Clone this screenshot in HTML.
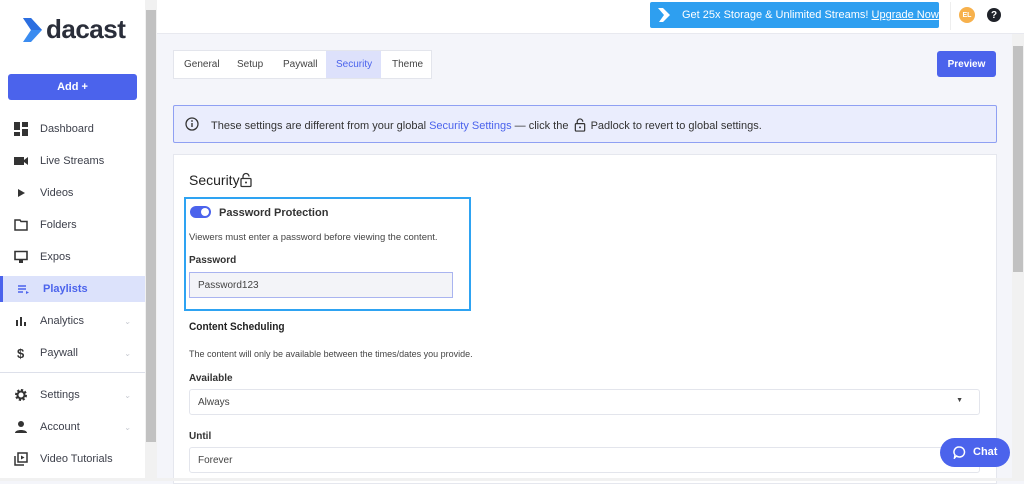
<!DOCTYPE html>
<html><head><meta charset="utf-8"><style>
*{box-sizing:border-box;margin:0;padding:0}
body{width:1024px;height:481px;overflow:hidden;font-family:"Liberation Sans",sans-serif;background:#f4f5fa;position:relative;color:#222}
.abs{position:absolute}
.side{left:0;top:0;width:145px;height:481px;background:#fff}
.sb{left:145px;top:0;width:12px;height:481px;background:#f1f1f1}
.nav{position:absolute;left:0;width:145px;height:26px;font-size:11px;color:#3c3f4a;display:flex;align-items:center}
.nav svg{position:absolute;left:14px;width:14px;height:14px}
.nav span{position:absolute;left:40px}
.chev{position:absolute;left:124px;font-size:8px;color:#c5c8d0}
.lbl{font-size:10px;font-weight:bold;color:#333}
.txt{font-size:10px;color:#444}
.btn{display:flex;align-items:center;justify-content:center}
</style></head><body>
<div class="abs side"></div>
<svg class="abs" style="left:22px;top:18px" width="22" height="24" viewBox="0 0 22 24"><path d="M1 0h8l11 12-11 12H1l8-12z" fill="#3b8cf0"/><path d="M1 0h8l11 12H9z" fill="#2c6ee0"/></svg>
<div class="abs" style="left:46px;top:14px;font-size:26px;font-weight:bold;color:#2a2e3a;letter-spacing:-0.5px">dacast</div>
<div class="abs btn" style="left:8px;top:74px;width:129px;height:26px;background:#4b63ec;border-radius:3px;color:#fff;font-size:11px;font-weight:bold">Add +</div>

<div class="nav" style="top:116px"><svg viewBox="0 0 14 14"><path d="M0 0h6v8H0zM8 0h6v5H8zM8 7h6v7H8zM0 10h6v4H0z" fill="#333"/></svg><span>Dashboard</span></div>
<div class="nav" style="top:148px"><svg viewBox="0 0 14 14"><path d="M0 3h10v8H0zM10 6l4-3v8l-4-3z" fill="#333"/></svg><span>Live Streams</span></div>
<div class="nav" style="top:180px"><svg viewBox="0 0 14 14"><path d="M4 3l7 4-7 4z" fill="#333"/></svg><span>Videos</span></div>
<div class="nav" style="top:212px"><svg viewBox="0 0 14 14"><path d="M1 2h5l1 1.5h6V12H1z" fill="none" stroke="#333" stroke-width="1.5"/></svg><span>Folders</span></div>
<div class="nav" style="top:244px"><svg viewBox="0 0 14 14"><path d="M1 1.5h12v8H1z" fill="none" stroke="#333" stroke-width="1.6"/><path d="M5 10h4v3H5z" fill="#333"/></svg><span>Expos</span></div>
<div class="abs" style="left:0;top:276px;width:145px;height:26px;background:#dce2fb"></div>
<div class="abs" style="left:0;top:276px;width:3px;height:26px;background:#4b63ec"></div>
<div class="nav" style="top:276px;color:#4b63ec"><svg viewBox="0 0 14 14" style="left:17px"><path d="M1 4h8M1 7h8M1 10h5" stroke="#4b63ec" stroke-width="1.4"/><path d="M9 9l3 1.5L9 12z" fill="#4b63ec"/></svg><span style="left:43px;font-weight:bold">Playlists</span></div>
<div class="nav" style="top:308px"><svg viewBox="0 0 14 14"><path d="M2 6h2v6H2zM6 3h2v9H6zM10 8h2v4h-2z" fill="#333"/></svg><span>Analytics</span><i class="chev">⌄</i></div>
<div class="nav" style="top:340px"><svg viewBox="0 0 14 14"><text x="3" y="12" font-size="13" font-weight="bold" fill="#333" font-family="Liberation Sans">$</text></svg><span>Paywall</span><i class="chev">⌄</i></div>
<div class="abs" style="left:0;top:372px;width:145px;height:1px;background:#dde0ea"></div>
<div class="nav" style="top:382px"><svg viewBox="0 0 14 14"><circle cx="7" cy="7" r="4.5" fill="none" stroke="#333" stroke-width="3" stroke-dasharray="2 1.5"/><circle cx="7" cy="7" r="3.5" fill="none" stroke="#333" stroke-width="2"/></svg><span>Settings</span><i class="chev">⌄</i></div>
<div class="nav" style="top:414px"><svg viewBox="0 0 14 14"><circle cx="7" cy="4" r="3" fill="#333"/><path d="M1 13c0-4 12-4 12 0z" fill="#333"/></svg><span>Account</span><i class="chev">⌄</i></div>
<div class="nav" style="top:446px"><svg viewBox="0 0 14 14"><path d="M4 1h9v9H4z" fill="none" stroke="#333" stroke-width="1.5"/><path d="M1 4v9h9" fill="none" stroke="#333" stroke-width="1.5"/><path d="M7 3.5l3.5 2-3.5 2z" fill="#333"/></svg><span>Video Tutorials</span></div>

<div class="abs sb"><div class="abs" style="left:1px;top:10px;width:10px;height:432px;background:#c1c1c1"></div></div>
<div class="abs" style="left:157px;top:0;width:867px;height:34px;background:#fff;border-bottom:1px solid #e8e9ef"></div>
<div class="abs" style="left:650px;top:2px;width:289px;height:26px;background:#2e9ff0;border-radius:2px;color:#fff;font-size:11px;line-height:26px"><svg class="abs" style="left:8px;top:6px" width="12" height="14" viewBox="0 0 12 14"><path d="M0 0h5l7 7-7 7H1l5-7z" fill="#fff"/></svg><span style="position:absolute;left:32px">Get 25x Storage &amp; Unlimited Streams! <u>Upgrade Now</u></span></div>
<div class="abs" style="left:950px;top:2px;width:1px;height:28px;background:#eee"></div>
<div class="abs btn" style="left:959px;top:7px;width:16px;height:16px;border-radius:50%;background:#f7b14c;color:#fff;font-size:7px;font-weight:bold">EL</div>
<div class="abs btn" style="left:987px;top:8px;width:14px;height:14px;border-radius:50%;background:#1f2229;color:#fff;font-size:10px;font-weight:bold">?</div>
<div class="abs" style="left:1012px;top:34px;width:12px;height:447px;background:#f1f1f1"><div class="abs" style="left:1px;top:12px;width:10px;height:226px;background:#c1c1c1"></div></div>

<div class="abs" style="left:173px;top:50px;width:259px;height:29px;background:#fff;border:1px solid #e3e5ec"></div>
<div class="abs" style="left:326px;top:51px;width:55px;height:27px;background:#dde1fb"></div>
<div class="abs txt" style="left:184px;top:59px">General</div>
<div class="abs txt" style="left:237px;top:59px">Setup</div>
<div class="abs txt" style="left:283px;top:59px">Paywall</div>
<div class="abs txt" style="left:336px;top:59px;color:#4b63ec">Security</div>
<div class="abs txt" style="left:392px;top:59px">Theme</div>
<div class="abs btn" style="left:937px;top:51px;width:59px;height:26px;background:#4b63ec;border-radius:3px;color:#fff;font-size:10px;font-weight:bold">Preview</div>

<div class="abs" style="left:173px;top:105px;width:824px;height:38px;background:#eaedfd;border:1px solid #8fa0f3;border-radius:2px"></div>
<svg class="abs" style="left:185px;top:117px" width="14" height="14" viewBox="0 0 14 14"><circle cx="7" cy="7" r="6" fill="none" stroke="#333" stroke-width="1.3"/><path d="M7 6v4" stroke="#333" stroke-width="1.4"/><circle cx="7" cy="4" r=".9" fill="#333"/></svg>
<div class="abs" style="left:211px;top:118px;font-size:11px;color:#333;white-space:nowrap">These settings are different from your global <span style="color:#4b63ec">Security Settings</span> — click the <svg width="12" height="14" viewBox="0 0 12 15" style="vertical-align:-3px;margin:0 2px"><path d="M3 6V4a3 3 0 016 0" fill="none" stroke="#333" stroke-width="1.3"/><rect x="1" y="6" width="10" height="8" rx="1" fill="none" stroke="#333" stroke-width="1.3"/><circle cx="6" cy="10" r="1" fill="#333"/></svg> Padlock to revert to global settings.</div>

<div class="abs" style="left:173px;top:154px;width:824px;height:330px;background:#fff;border:1px solid #e5e7ee"></div>
<div class="abs" style="left:189px;top:172px;font-size:14px;color:#222">Security</div>
<svg class="abs" style="left:240px;top:172px" width="12" height="16" viewBox="0 0 12 15"><path d="M3 6V4a3 3 0 016 0" fill="none" stroke="#333" stroke-width="1.3"/><rect x="1" y="6" width="10" height="8" rx="1" fill="none" stroke="#333" stroke-width="1.3"/><circle cx="6" cy="10" r="1" fill="#333"/></svg>
<div class="abs" style="left:184px;top:197px;width:287px;height:114px;border:2px solid #2ea3f2"></div>
<div class="abs" style="left:190px;top:206px;width:21px;height:12px;border-radius:6px;background:#4b63ec"><div class="abs" style="left:11px;top:2px;width:8px;height:8px;border-radius:50%;background:#fff"></div></div>
<div class="abs lbl" style="left:219px;top:207px;font-size:11px">Password Protection</div>
<div class="abs" style="left:189px;top:232px;font-size:9.5px;color:#444">Viewers must enter a password before viewing the content.</div>
<div class="abs lbl" style="left:189px;top:255px">Password</div>
<div class="abs" style="left:189px;top:272px;width:264px;height:26px;background:#f3f4f8;border:1px solid #a9b4f0;font-size:10px;color:#444;padding:7px 8px">Password123</div>
<div class="abs" style="left:189px;top:321px;font-size:11px;color:#222;font-weight:bold;transform:scaleX(.92);transform-origin:left">Content Scheduling</div>
<div class="abs" style="left:189px;top:349px;font-size:9px;color:#444">The content will only be available between the times/dates you provide.</div>
<div class="abs lbl" style="left:189px;top:373px">Available</div>
<div class="abs" style="left:189px;top:389px;width:791px;height:26px;background:#fff;border:1px solid #e3e5ec;border-radius:3px;font-size:10px;color:#444;padding:7px 8px">Always<span style="position:absolute;right:16px;top:7px;font-size:7px">▼</span></div>
<div class="abs lbl" style="left:189px;top:431px">Until</div>
<div class="abs" style="left:189px;top:447px;width:791px;height:26px;background:#fff;border:1px solid #e3e5ec;border-radius:3px;font-size:10px;color:#444;padding:7px 8px">Forever</div>
<div class="abs" style="left:940px;top:438px;width:70px;height:29px;background:#4b63ec;border-radius:15px;color:#fff;font-size:11px;font-weight:bold;line-height:29px"><svg class="abs" style="left:13px;top:8px" width="13" height="13" viewBox="0 0 13 13"><path d="M6.5 1a5 5 0 11-3 9L1.5 12l.5-3A5 5 0 016.5 1z" fill="none" stroke="#fff" stroke-width="1.5"/></svg><span style="position:absolute;left:33px">Chat</span></div>
<div class="abs" style="left:0;top:478px;width:1024px;height:3px;background:#f1f1f1"></div>
</body></html>
